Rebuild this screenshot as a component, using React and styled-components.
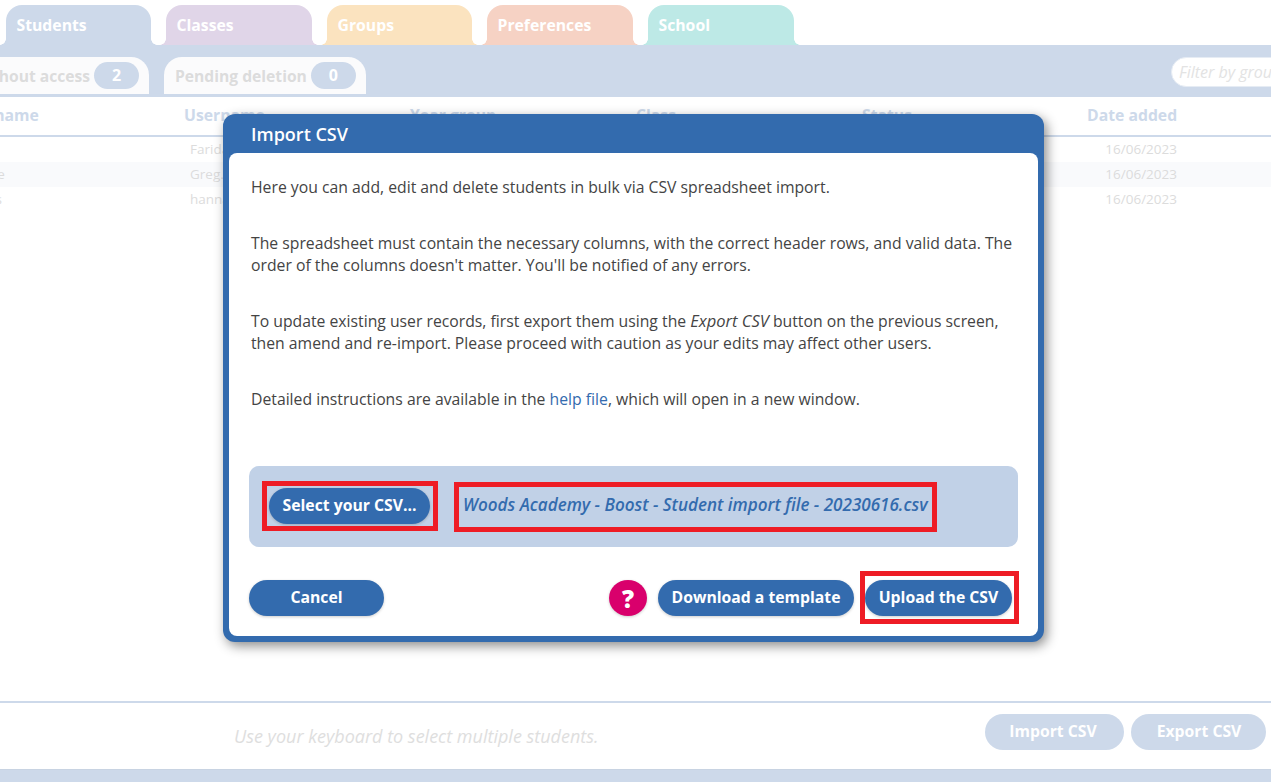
import React from "react";
import styled, { createGlobalStyle } from "styled-components";

const Global = createGlobalStyle`
  html, body { margin: 0; padding: 0; height: 100%; overflow: hidden; background: #fff; }
  body { font-family: "Open Sans", "Noto Sans", sans-serif; }
  * { box-sizing: border-box; }
`;

const Page = styled.div`
  position: relative;
  width: 1271px;
  height: 782px;
  overflow: hidden;
  display: flex;
  flex-direction: column;
  background: #fff;
`;

const TabRow = styled.nav`
  display: flex;
  gap: 15px;
  height: 45px;
  padding: 5px 0 0 6px;
`;

const Tab = styled.div`
  position: relative;
  width: ${(p) => p.$w || 146}px;
  padding: 9px 0 0 10.5px;
  border-radius: 16px 16px 0 0;
  background: ${(p) => p.$c};
  color: #fff;
  font-size: 15.75px;
  font-weight: 700;
  line-height: 22px;
  &::before, &::after {
    content: "";
    position: absolute;
    bottom: 0;
    width: 6px;
    height: 6px;
  }
  &::before {
    left: -6px;
    background: radial-gradient(circle at 0 0, transparent 5.5px, ${(p) => p.$c} 6px);
  }
  &::after {
    right: -6px;
    background: radial-gradient(circle at 100% 0, transparent 5.5px, ${(p) => p.$c} 6px);
  }
`;

const Bar = styled.div`
  display: flex;
  height: 52px;
  padding-top: 12px;
  background: #cdd9ea;
  gap: 15px;
  overflow: hidden;
`;

const SubTab = styled.div`
  flex: none;
  display: flex;
  align-items: center;
  gap: 4px;
  height: 37px;
  width: ${(p) => p.$w}px;
  margin-left: ${(p) => p.$ml || 0}px;
  padding-left: 11px;
  border-radius: 18px 18px 0 0;
  background: #fbfbfc;
  color: #dcdcdc;
  font-size: 15.65px;
  font-weight: 700;
  white-space: nowrap;
`;

const Badge = styled.span`
  flex: none;
  width: 45px;
  height: 27px;
  border-radius: 14px;
  background: #cdd9ea;
  color: #fff;
  font-size: 16px;
  line-height: 27px;
  text-align: center;
`;

const Filter = styled.div`
  flex: none;
  width: 160px;
  height: 30px;
  margin-left: auto;
  margin-right: -60px;
  padding-left: 7px;
  border-radius: 15px;
  background: #fff;
  border: 1px solid #e6ecf4;
  color: #e3e3e3;
  font-size: 16px;
  font-style: italic;
  line-height: 28px;
  white-space: nowrap;
`;

const Table = styled.div`
  flex: 1;
  margin-left: -32px;
  width: 1303px;
`;

const columns = "216px 226px 226px 226px 225px 90px";

const HeadRow = styled.div`
  display: grid;
  grid-template-columns: ${columns};
  height: 40px;
  padding-bottom: 2px;
  align-items: center;
  border-bottom: 2px solid #cdd9ea;
  color: #cdd9ea;
  font-size: 15.75px;
  font-weight: 700;
`;

const HeadCell = styled.div`
  white-space: nowrap;
`;

const Row = styled.div`
  display: grid;
  grid-template-columns: ${columns};
  height: 25px;
  padding-bottom: 2px;
  align-items: center;
  background: ${(p) => (p.$alt ? "#f9fafc" : "#fff")};
  color: #dcdcdc;
  font-size: 13.5px;
`;

const Cell = styled.div`
  padding-left: ${(p) => (p.$indent ? 6 : 0)}px;
  text-align: ${(p) => (p.$right ? "right" : "left")};
  white-space: nowrap;
`;

const Footer = styled.div`
  flex: none;
  display: flex;
  height: 68px;
  border-top: 2px solid #cdd9ea;
  padding: 11px 5px 0 234px;
`;

const Hint = styled.div`
  flex: 1;
  padding-top: 10px;
  color: #dedede;
  font-size: 18px;
  font-style: italic;
  line-height: 24px;
`;

const GhostButton = styled.div`
  width: ${(p) => p.$w}px;
  height: 36px;
  margin-left: 7px;
  padding: 0 ${(p) => p.$pr || 0}px 0 ${(p) => p.$pl || 0}px;
  border-radius: 18px;
  background: #cdd9ea;
  color: #fff;
  font-size: 15.75px;
  font-weight: 700;
  line-height: 34px;
  text-align: center;
`;

const BottomBar = styled.div`
  flex: none;
  height: 13px;
  border-top: 1px solid #c8d3e2;
  background: #cdd9ea;
`;

const Modal = styled.section`
  position: absolute;
  left: 223px;
  top: 114px;
  width: 821px;
  height: 528px;
  display: flex;
  flex-direction: column;
  padding: 0 6px 6px;
  border-radius: 12px;
  background: #336bae;
  box-shadow: 3px 4px 12px rgba(0, 0, 0, 0.45);
`;

const ModalTitle = styled.h2`
  margin: 0;
  height: 39px;
  padding-left: 22px;
  color: #fff;
  font-size: 18px;
  font-weight: 600;
  line-height: 41px;
`;

const ModalBody = styled.div`
  flex: 1;
  display: flex;
  flex-direction: column;
  padding: 23px 20px 20px 22px;
  border-radius: 8px;
  background: #fff;
  color: #444;
  font-size: 15.75px;
  line-height: 22.5px;
`;

const Para = styled.p`
  margin: 0 0 33px;
`;

const Emphasis = styled.em`
  font-size: 16.5px;
`;

const Link = styled.a`
  color: #336bae;
`;

const UploadPanel = styled.div`
  flex: none;
  display: flex;
  align-items: center;
  height: 81px;
  margin: 23px 0 0 -2px;
  padding: 0 0 1px 20px;
  border-radius: 10px;
  background: #c1d1e7;
`;

const Pill = styled.button`
  position: relative;
  flex: none;
  width: ${(p) => p.$w}px;
  height: 36px;
  margin-left: ${(p) => p.$ml || 0}px;
  padding: 0 0 2px;
  border: 0;
  border-radius: 18px;
  background: #336bae;
  box-shadow: 0 1px 3px rgba(0, 0, 0, 0.2);
  color: #fff;
  font-family: inherit;
  font-size: 15.75px;
  font-weight: 700;
`;

const RedBox = styled.span`
  position: absolute;
  top: ${(p) => p.$t}px;
  right: ${(p) => p.$r}px;
  bottom: ${(p) => p.$b}px;
  left: ${(p) => p.$l}px;
  border: 5px solid #ee1c25;
  pointer-events: none;
`;

const FileName = styled.div`
  position: relative;
  margin-left: 33px;
  padding-bottom: 3px;
  color: #336bae;
  font-size: 17.07px;
  font-style: italic;
  font-weight: 600;
  line-height: 23px;
  white-space: nowrap;
`;

const Actions = styled.div`
  flex: none;
  display: flex;
  align-items: center;
  margin: 33px 6px 0 -2px;
`;

const Help = styled.button`
  flex: none;
  width: 38px;
  height: 36px;
  margin-left: auto;
  margin-right: 11px;
  padding: 0;
  border: 0;
  border-radius: 50%;
  background: #d9006c;
  box-shadow: 0 1px 3px rgba(0, 0, 0, 0.2);
  color: #fff;
  font-family: inherit;
  font-size: 24px;
  font-weight: 800;
`;

const tabs = [
  ["Students", "#cdd9ea", 145],
  ["Classes", "#e0d5e8", 146],
  ["Groups", "#fbe3bf", 145],
  ["Preferences", "#f6d2c4", 146],
  ["School", "#bde9e6", 146],
];

const rows = [
  ["", "Farida.Ali", "16/06/2023"],
  ["Grace", "Greg.Hall", "16/06/2023"],
  ["Jones", "hannah.j", "16/06/2023"],
];

export default function App() {
  return (
    <Page>
      <Global />
      <TabRow>
        {tabs.map(([t, c, w]) => (
          <Tab key={t} $c={c} $w={w}>{t}</Tab>
        ))}
      </TabRow>
      <Bar>
        <SubTab $w={188} $ml={-39}>Without access <Badge>2</Badge></SubTab>
        <SubTab $w={202}>Pending deletion <Badge>0</Badge></SubTab>
        <Filter>Filter by group</Filter>
      </Bar>
      <Table>
        <HeadRow>
          <HeadCell>Surname</HeadCell>
          <HeadCell>Username</HeadCell>
          <HeadCell>Year group</HeadCell>
          <HeadCell>Class</HeadCell>
          <HeadCell>Status</HeadCell>
          <HeadCell>Date added</HeadCell>
        </HeadRow>
        {rows.map(([n, u, d], i) => (
          <Row key={u} $alt={i === 1}>
            <Cell>{n}</Cell>
            <Cell $indent>{u}</Cell>
            <Cell />
            <Cell />
            <Cell />
            <Cell $right>{d}</Cell>
          </Row>
        ))}
      </Table>
      <Footer>
        <Hint>Use your keyboard to select multiple students.</Hint>
        <GhostButton $w={139} $pr={3}>Import CSV</GhostButton>
        <GhostButton $w={135} $pl={1}>Export CSV</GhostButton>
      </Footer>
      <BottomBar />

      <Modal>
        <ModalTitle>Import CSV</ModalTitle>
        <ModalBody>
          <Para>Here you can add, edit and delete students in bulk via CSV spreadsheet import.</Para>
          <Para>The spreadsheet must contain the necessary columns, with the correct header rows, and valid data. The order of the columns doesn't matter. You'll be notified of any errors.</Para>
          <Para>To update existing user records, first export them using the <Emphasis>Export CSV</Emphasis> button on the previous screen, then amend and re-import. Please proceed with caution as your edits may affect other users.</Para>
          <Para>Detailed instructions are available in the <Link>help file</Link>, which will open in a new window.</Para>
          <UploadPanel>
            <Pill $w={161}>
              Select your CSV...
              <RedBox $t={-7} $r={-8} $b={-7} $l={-7} />
            </Pill>
            <FileName>
              Woods Academy - Boost - Student import file - 20230616.csv
              <RedBox $t={-11} $r={-10} $b={-13} $l={-9} />
            </FileName>
          </UploadPanel>
          <Actions>
            <Pill $w={135}>Cancel</Pill>
            <Help>?</Help>
            <Pill $w={196}>Download a template</Pill>
            <Pill $w={147} $ml={11}>
              Upload the CSV
              <RedBox $t={-9} $r={-7} $b={-8} $l={-5} />
            </Pill>
          </Actions>
        </ModalBody>
      </Modal>
    </Page>
  );
}
